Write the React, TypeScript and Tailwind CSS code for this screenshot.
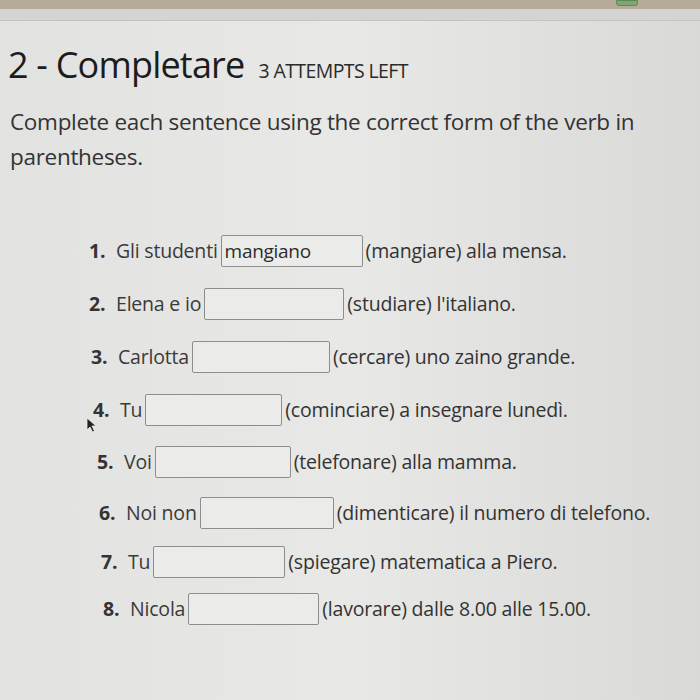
import React from "react";

// Italian verb drill, as photographed off a laptop screen.
const items = [
  { n: 1, subject: "Gli studenti", value: "mangiano", rest: "(mangiare) alla mensa.", indent: "ml-[0px] h-[53px]", box: "w-[142px]" },
  { n: 2, subject: "Elena e io", value: "", rest: "(studiare) l'italiano.", indent: "ml-[0px] h-[53px]", box: "w-[140px]" },
  { n: 3, subject: "Carlotta", value: "", rest: "(cercare) uno zaino grande.", indent: "ml-[2px] h-[54px]", box: "w-[138px]" },
  { n: 4, subject: "Tu", value: "", rest: "(cominciare) a insegnare lunedì.", indent: "ml-[4px] h-[52px]", box: "w-[137px]" },
  { n: 5, subject: "Voi", value: "", rest: "(telefonare) alla mamma.", indent: "ml-[8px] h-[51px]", box: "w-[136px]" },
  { n: 6, subject: "Noi non", value: "", rest: "(dimenticare) il numero di telefono.", indent: "ml-[10px] h-[51px]", box: "w-[134px]" },
  { n: 7, subject: "Tu", value: "", rest: "(spiegare) matematica a Piero.", indent: "ml-[12px] h-[47px]", box: "w-[132px]" },
  { n: 8, subject: "Nicola", value: "", rest: "(lavorare) dalle 8.00 alle 15.00.", indent: "ml-[14px] h-[47px]", box: "w-[131px]" },
];

function Row({ item }: { item: (typeof items)[number] }) {
  return (
    <li className={`flex items-center gap-[3px] ${item.indent}`}>
      <span className="font-bold w-[22px] text-[#333]">{item.n}.</span>
      <span className="ml-[2px] text-[#3a3a3a]">{item.subject}</span>
      <input
        readOnly
        value={item.value}
        className={`${item.box} h-[32px] border border-[#8d8d8d] rounded-[2px] bg-[#ebebe9] px-[3px] text-[19px] tracking-[-0.3px] text-[#2c2c2c] outline-none`}
      />
      <span className="text-[#333]">{item.rest}</span>
    </li>
  );
}

export default function App() {
  return (
    <div
      className="relative h-[700px] w-[700px] overflow-hidden bg-gradient-to-r from-[#e2e2e0] via-[#e8e8e6] to-[#d9d9d7] text-[#2b2b2b]"
      style={{ fontFamily: '"Open Sans", "Noto Sans", sans-serif' }}
    >
      <div className="h-[9px] bg-[#b6aa98]" />
      <div className="h-[12px] bg-[#d4d4d2] border-b border-[#c4c4c2]" />
      <div className="absolute right-[62px] top-0 h-[6px] w-[22px] rounded-b-[3px] bg-[#7fa870] border border-[#5f8a55]" />

      <div className="pl-[8px] pt-[17px]">
        <div className="flex items-baseline gap-[14px]">
          <h1 className="text-[36px] font-medium tracking-[-0.8px] text-[#1c1c1c]">2 - Completare</h1>
          <span className="text-[19.5px] tracking-[-0.6px] text-[#2a2a2a]">3 ATTEMPTS LEFT</span>
        </div>
        <p className="mt-[12px] pl-[2px] text-[22.5px] leading-[35px] text-[#333] tracking-[-0.3px] w-[680px]">
          Complete each sentence using the correct form of the verb in parentheses.
        </p>
      </div>

      <ol className="mt-[50px] pl-[89px] text-[19.5px] tracking-[-0.2px]">
        {items.map((it) => (
          <Row key={it.n} item={it} />
        ))}
      </ol>

      <svg className="absolute left-[86px] top-[417px]" width="12" height="16" viewBox="0 0 12 16">
        <path d="M1 1 L1 13 L4 10 L6.5 15 L8.5 14 L6 9 L10 9 Z" fill="#222" stroke="#eee" strokeWidth="0.8" />
      </svg>
    </div>
  );
}
